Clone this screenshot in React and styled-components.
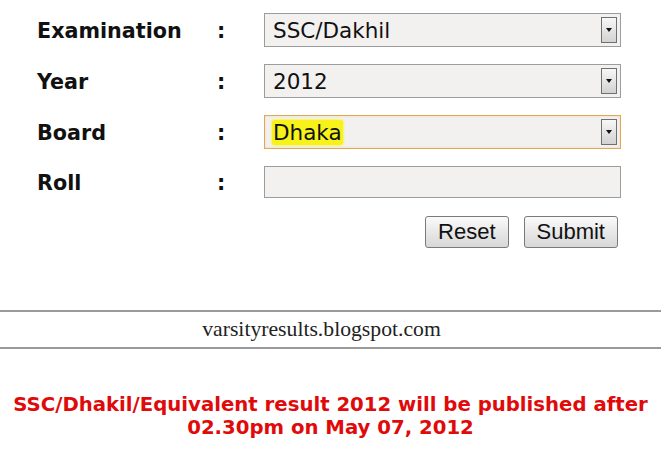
import styled, { createGlobalStyle } from 'styled-components'

const Global = createGlobalStyle`
    html, body {
        margin: 0;
        padding: 0;
        background: #fff;
    }
`
const Page = styled.div`
    width: 661px;
    height: 453px;
    overflow: hidden;
    display: flex;
    flex-direction: column;
`
const Form = styled.div`
    display: grid;
    grid-template-columns: 180px 47px 357px;
    row-gap: 17px;
    padding: 13px 0 0 37px;
    align-items: center;
`
const Label = styled.div`
    font-family: "DejaVu Sans", Verdana, sans-serif;
    font-weight: bold;
    font-size: 20.7px;
    color: #111;
    padding-top: 2px;
`
const Colon = styled(Label)``

const Field = styled.div`
    box-sizing: border-box;
    height: ${p => p.$h || 34}px;
    display: flex;
    align-items: center;
    justify-content: space-between;
    padding: 0 3px 0 7px;
    background: #f3f0f0;
    border: 1px solid ${p => p.$focus ? '#e2a85a' : '#9c9c9c'};
    box-shadow: ${p => p.$focus ? 'inset 0 0 2px #f4d3a0' : 'none'};
    font-family: "DejaVu Sans", Verdana, sans-serif;
    font-size: 21.5px;
    color: #111;
`
const Value = styled.span`
    padding: 0 1px;
    border-radius: 3px;
    background: ${p => p.$mark ? '#f6f21a' : 'transparent'};
    box-shadow: ${p => p.$mark ? '0 0 2px 1px #f8f46a' : 'none'};
`
const DropButton = styled.span`
    box-sizing: border-box;
    width: 16px;
    height: 26px;
    border: 1px solid #707070;
    background: linear-gradient(#f7f7f7, #d2d2d2);
    display: flex;
    align-items: center;
    justify-content: center;

    &::after {
        content: '';
        border-left: 3px solid transparent;
        border-right: 3px solid transparent;
        border-top: 4px solid #111;
    }
`
const Actions = styled.div`
    display: flex;
    justify-content: flex-end;
    gap: 15px;
    width: 584px;
    margin-top: 18px;
    padding-right: 3px;
    box-sizing: border-box;
    margin-left: 37px;
`
const Button = styled.button`
    height: 32px;
    padding: 0 12px;
    font-family: "Liberation Sans", Arial, sans-serif;
    font-size: 22px;
    color: #111;
    background: linear-gradient(#fbfbfb, #e6e6e6 55%, #d8d8d8);
    border: 1px solid #7a7a7a;
    border-radius: 3px;
`
const Footer = styled.div`
    margin-top: 62px;
    border-top: 2px solid #9a9a9a;
    border-bottom: 2px solid #9a9a9a;
    height: 35px;
    padding-right: 18px;
    display: flex;
    align-items: center;
    justify-content: center;
    font-family: "Liberation Serif", "Times New Roman", serif;
    font-size: 21.7px;
    color: #222;
`
const Notice = styled.p`
    margin: 44px 0 0;
    text-align: center;
    font-family: "DejaVu Sans", Verdana, sans-serif;
    font-weight: bold;
    font-size: 19.7px;
    line-height: 23px;
    color: #e00a0a;
`

const Select = ({value, focus, mark}) => (
    <Field $focus={focus}>
        <Value $mark={mark}>{value}</Value>
        <DropButton/>
    </Field>
)

const App = () => {
    return(
        <Page>
            <Global/>
            <Form>
                <Label>Examination</Label>
                <Colon>:</Colon>
                <Select value="SSC/Dakhil"/>

                <Label>Year</Label>
                <Colon>:</Colon>
                <Select value="2012"/>

                <Label>Board</Label>
                <Colon>:</Colon>
                <Select value="Dhaka" focus mark/>

                <Label>Roll</Label>
                <Colon>:</Colon>
                <Field $h={32}/>
            </Form>
            <Actions>
                <Button>Reset</Button>
                <Button>Submit</Button>
            </Actions>
            <Footer>varsityresults.blogspot.com</Footer>
            <Notice>
                SSC/Dhakil/Equivalent result 2012 will be published after<br/>
                02.30pm on May 07, 2012
            </Notice>
        </Page>
    )
}

export default App
